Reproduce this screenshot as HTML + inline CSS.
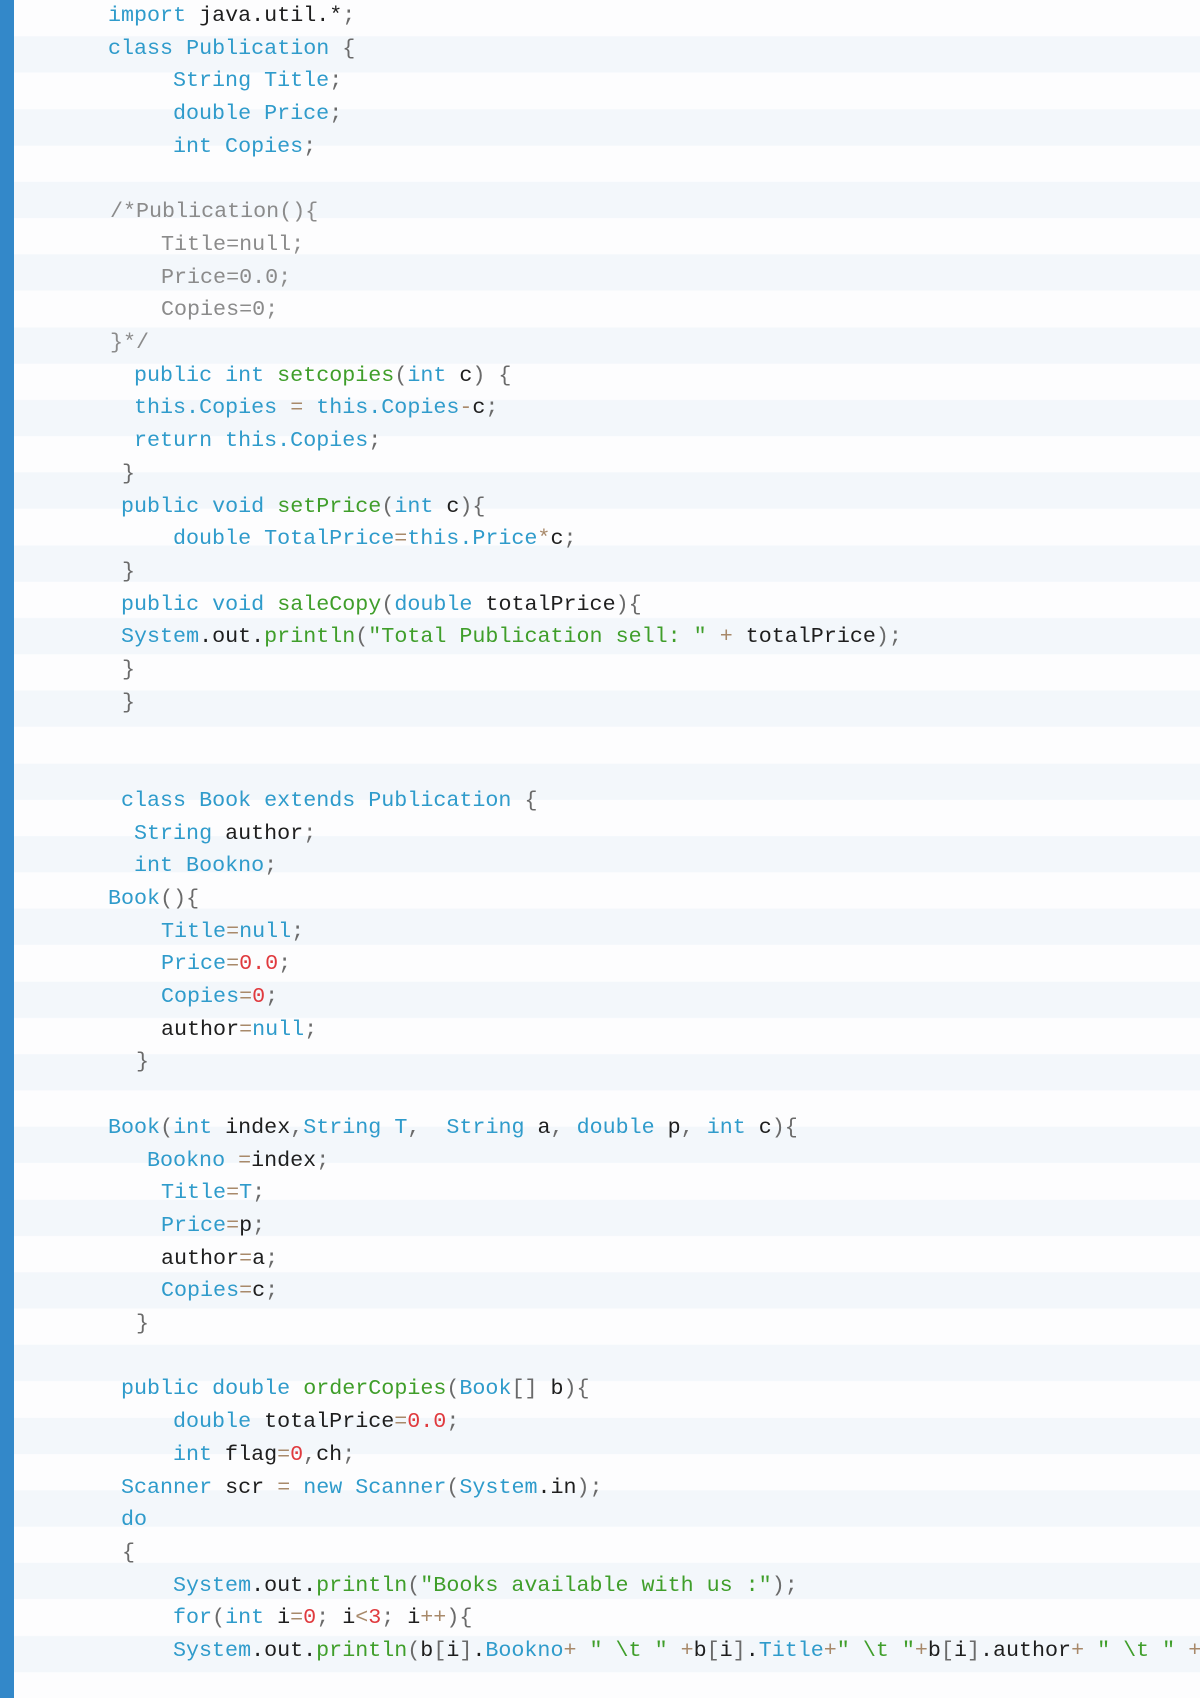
<!DOCTYPE html>
<html><head><meta charset="utf-8"><style>
body{margin:0;width:1200px;height:1698px;position:relative;overflow:hidden;font-family:"Liberation Mono",monospace;font-size:21.7px;color:#1e1e1e;
background:repeating-linear-gradient(to bottom,#fdfdfe 0px,#fdfdfe 36.35px,#f3f7fb 36.35px,#f3f7fb 72.7px)}
.bar{position:absolute;left:0;top:0;width:14px;height:1698px;background:#3388c9}
.l{position:absolute;white-space:pre;line-height:24px}
.k{color:#2f9bcb}.g{color:#3f9e2a}.c{color:#8b8b8b}.o{color:#a8896a}.n{color:#e03a3e}.p{color:#6a6a6a}
</style></head><body>
<div class="bar"></div>

<div class="l" style="top:4px;left:108px"><span class="k">import</span> java.util.*<span class="p">;</span></div>
<div class="l" style="top:36.7px;left:108px"><span class="k">class Publication</span> <span class="p">{</span></div>
<div class="l" style="top:69.4px;left:173px"><span class="k">String Title</span><span class="p">;</span></div>
<div class="l" style="top:102.1px;left:173px"><span class="k">double Price</span><span class="p">;</span></div>
<div class="l" style="top:134.8px;left:173px"><span class="k">int Copies</span><span class="p">;</span></div>
<div class="l c" style="top:200.2px;left:110px">/*Publication(){</div>
<div class="l c" style="top:232.9px;left:161px">Title=null;</div>
<div class="l c" style="top:265.6px;left:161px">Price=0.0;</div>
<div class="l c" style="top:298.3px;left:161px">Copies=0;</div>
<div class="l c" style="top:331px;left:110px">}*/</div>
<div class="l" style="top:363.7px;left:134px"><span class="k">public int</span> <span class="g">setcopies</span><span class="p">(</span><span class="k">int</span> c<span class="p">) {</span></div>
<div class="l" style="top:396.4px;left:134px"><span class="k">this.Copies</span> <span class="o">=</span> <span class="k">this.Copies</span><span class="o">-</span>c<span class="p">;</span></div>
<div class="l" style="top:429.1px;left:134px"><span class="k">return this.Copies</span><span class="p">;</span></div>
<div class="l p" style="top:461.8px;left:122px">}</div>
<div class="l" style="top:494.5px;left:121px"><span class="k">public void</span> <span class="g">setPrice</span><span class="p">(</span><span class="k">int</span> c<span class="p">){</span></div>
<div class="l" style="top:527.2px;left:173px"><span class="k">double TotalPrice</span><span class="o">=</span><span class="k">this.Price</span><span class="o">*</span>c<span class="p">;</span></div>
<div class="l p" style="top:559.9px;left:122px">}</div>
<div class="l" style="top:592.6px;left:121px"><span class="k">public void</span> <span class="g">saleCopy</span><span class="p">(</span><span class="k">double</span> totalPrice<span class="p">){</span></div>
<div class="l" style="top:625.3px;left:121px"><span class="k">System</span>.out.<span class="g">println</span><span class="p">(</span><span class="g">"Total Publication sell: "</span> <span class="o">+</span> totalPrice<span class="p">);</span></div>
<div class="l p" style="top:658px;left:122px">}</div>
<div class="l p" style="top:690.7px;left:122px">}</div>
<div class="l" style="top:788.8px;left:121px"><span class="k">class Book extends Publication</span> <span class="p">{</span></div>
<div class="l" style="top:821.5px;left:134px"><span class="k">String</span> author<span class="p">;</span></div>
<div class="l" style="top:854.2px;left:134px"><span class="k">int Bookno</span><span class="p">;</span></div>
<div class="l" style="top:886.9px;left:108px"><span class="k">Book</span><span class="p">(){</span></div>
<div class="l" style="top:919.6px;left:161px"><span class="k">Title</span><span class="o">=</span><span class="k">null</span><span class="p">;</span></div>
<div class="l" style="top:952.3px;left:161px"><span class="k">Price</span><span class="o">=</span><span class="n">0.0</span><span class="p">;</span></div>
<div class="l" style="top:985px;left:161px"><span class="k">Copies</span><span class="o">=</span><span class="n">0</span><span class="p">;</span></div>
<div class="l" style="top:1017.7px;left:161px">author<span class="o">=</span><span class="k">null</span><span class="p">;</span></div>
<div class="l p" style="top:1050.4px;left:136px">}</div>
<div class="l" style="top:1115.8px;left:108px"><span class="k">Book</span><span class="p">(</span><span class="k">int</span> index<span class="p">,</span><span class="k">String T</span><span class="p">,</span>  <span class="k">String</span> a<span class="p">,</span> <span class="k">double</span> p<span class="p">,</span> <span class="k">int</span> c<span class="p">){</span></div>
<div class="l" style="top:1148.5px;left:147px"><span class="k">Bookno</span> <span class="o">=</span>index<span class="p">;</span></div>
<div class="l" style="top:1181.2px;left:161px"><span class="k">Title</span><span class="o">=</span><span class="k">T</span><span class="p">;</span></div>
<div class="l" style="top:1213.9px;left:161px"><span class="k">Price</span><span class="o">=</span>p<span class="p">;</span></div>
<div class="l" style="top:1246.6px;left:161px">author<span class="o">=</span>a<span class="p">;</span></div>
<div class="l" style="top:1279.3px;left:161px"><span class="k">Copies</span><span class="o">=</span>c<span class="p">;</span></div>
<div class="l p" style="top:1312px;left:136px">}</div>
<div class="l" style="top:1377.4px;left:121px"><span class="k">public double</span> <span class="g">orderCopies</span><span class="p">(</span><span class="k">Book</span><span class="p">[]</span> b<span class="p">){</span></div>
<div class="l" style="top:1410.1px;left:173px"><span class="k">double</span> totalPrice<span class="o">=</span><span class="n">0.0</span><span class="p">;</span></div>
<div class="l" style="top:1442.8px;left:173px"><span class="k">int</span> flag<span class="o">=</span><span class="n">0</span><span class="p">,</span>ch<span class="p">;</span></div>
<div class="l" style="top:1475.5px;left:121px"><span class="k">Scanner</span> scr <span class="o">=</span> <span class="k">new Scanner</span><span class="p">(</span><span class="k">System</span>.in<span class="p">);</span></div>
<div class="l" style="top:1508.2px;left:121px"><span class="k">do</span></div>
<div class="l p" style="top:1540.9px;left:122px">{</div>
<div class="l" style="top:1573.6px;left:173px"><span class="k">System</span>.out.<span class="g">println</span><span class="p">(</span><span class="g">"Books available with us :"</span><span class="p">);</span></div>
<div class="l" style="top:1606.3px;left:173px"><span class="k">for</span><span class="p">(</span><span class="k">int</span> i<span class="o">=</span><span class="n">0</span><span class="p">;</span> i<span class="o">&lt;</span><span class="n">3</span><span class="p">;</span> i<span class="o">++</span><span class="p">){</span></div>
<div class="l" style="top:1639px;left:173px"><span class="k">System</span>.out.<span class="g">println</span><span class="p">(</span>b<span class="p">[</span>i<span class="p">]</span>.<span class="k">Bookno</span><span class="o">+</span> <span class="g">" \t "</span> <span class="o">+</span>b<span class="p">[</span>i<span class="p">]</span>.<span class="k">Title</span><span class="o">+</span><span class="g">" \t "</span><span class="o">+</span>b<span class="p">[</span>i<span class="p">]</span>.author<span class="o">+</span> <span class="g">" \t "</span> <span class="o">+</span></div>
</body></html>
